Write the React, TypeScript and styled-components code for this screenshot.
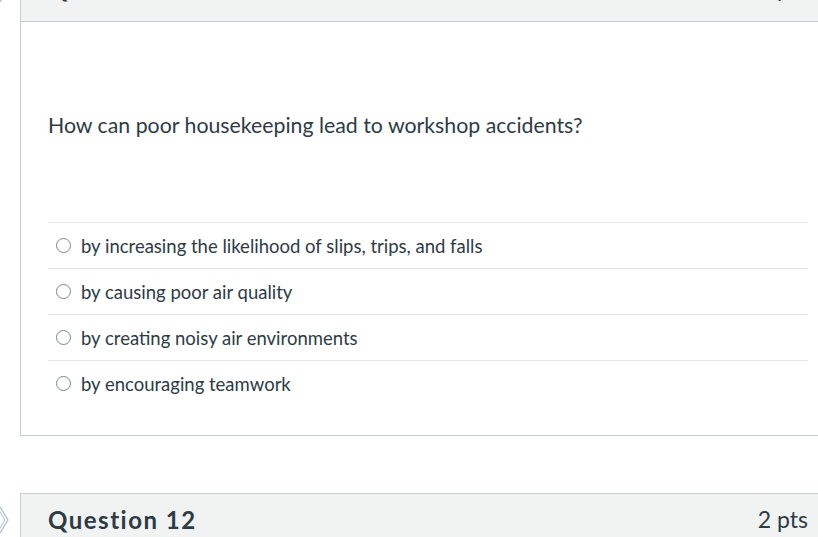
import React from 'react';
import styled, { createGlobalStyle } from 'styled-components';

// --- STYLES ---

const colors = {
  text: '#2d3b45',
  border: '#c7cdd1',
  headerBg: '#f1f2f2',
  divider: '#e3e5e6',
  radio: '#7b868e',
  flag: '#a9bccb',
};

const GlobalStyle = createGlobalStyle`
  html, body {
    margin: 0;
    padding: 0;
    background: #ffffff;
    overflow: hidden;
  }
  body {
    font-family: Lato, "Open Sans", "Liberation Sans", sans-serif;
    color: ${colors.text};
  }
`;

const Page = styled.div`
  display: flex;
  flex-direction: column;
  gap: 57px;
  padding-left: 20px;
  margin-top: -38px;
`;

const QuestionCard = styled.section`
  position: relative;
  width: 812px;
  box-sizing: border-box;
  border: 1px solid ${colors.border};
`;

const QuestionHeader = styled.header`
  position: relative;
  display: flex;
  justify-content: space-between;
  align-items: flex-start;
  height: 59px;
  box-sizing: border-box;
  padding: 12px 10px 0 27px;
  background: ${colors.headerBg};
  border-bottom: 1px solid ${colors.border};
`;

const HeaderTitle = styled.h2`
  margin: 0;
  font-size: 24px;
  font-weight: 700;
  letter-spacing: 1.5px;
  line-height: 1.2;
`;

const Points = styled.span`
  font-size: 23px;
  font-weight: 400;
  line-height: 1.2;
  margin-right: 13px;
`;

// la petite flèche de navigation à gauche de l'en-tête
const Flag = styled.svg`
  position: absolute;
  left: -21px;
  top: 12px;
`;

const QuestionBody = styled.div`
  padding: 87px 23px 29px 27px;
`;

const QuestionText = styled.p`
  margin: 0 0 80px;
  font-size: 21.3px;
  line-height: 33px;
`;

const AnswerList = styled.div`
  display: flex;
  flex-direction: column;
`;

const AnswerRow = styled.label`
  display: flex;
  align-items: center;
  height: 46px;
  box-sizing: border-box;
  border-top: 1px solid ${colors.divider};
  font-size: 18.5px;
`;

const Radio = styled.span`
  width: 15px;
  height: 15px;
  box-sizing: border-box;
  border: 1px solid ${colors.radio};
  border-radius: 50%;
  margin: 0 10px 0 8px;
  flex-shrink: 0;
`;

// --- COMPONENT ---

const answers = [
  'by increasing the likelihood of slips, trips, and falls',
  'by causing poor air quality',
  'by creating noisy air environments',
  'by encouraging teamwork',
];

const FlagIcon = () => (
  <Flag width="12" height="28" viewBox="0 0 12 28">
    <polyline points="0,1 8,14 0,27" fill="none" stroke={colors.flag} strokeWidth="1.2" />
    <polyline points="-3,1 5,14 -3,27" fill="none" stroke={colors.flag} strokeWidth="1" />
  </Flag>
);

const App: React.FC = () => {
  return (
    <>
      <GlobalStyle />
      <Page>
        <QuestionCard>
          <QuestionHeader>
            <FlagIcon />
            <HeaderTitle>Question 11</HeaderTitle>
            <Points>2 pts</Points>
          </QuestionHeader>
          <QuestionBody>
            <QuestionText>How can poor housekeeping lead to workshop accidents?</QuestionText>
            <AnswerList>
              {answers.map((a) => (
                <AnswerRow key={a}>
                  <Radio />
                  {a}
                </AnswerRow>
              ))}
            </AnswerList>
          </QuestionBody>
        </QuestionCard>
        <QuestionCard>
          <QuestionHeader>
            <FlagIcon />
            <HeaderTitle>Question 12</HeaderTitle>
            <Points>2 pts</Points>
          </QuestionHeader>
        </QuestionCard>
      </Page>
    </>
  );
};

export default App;
